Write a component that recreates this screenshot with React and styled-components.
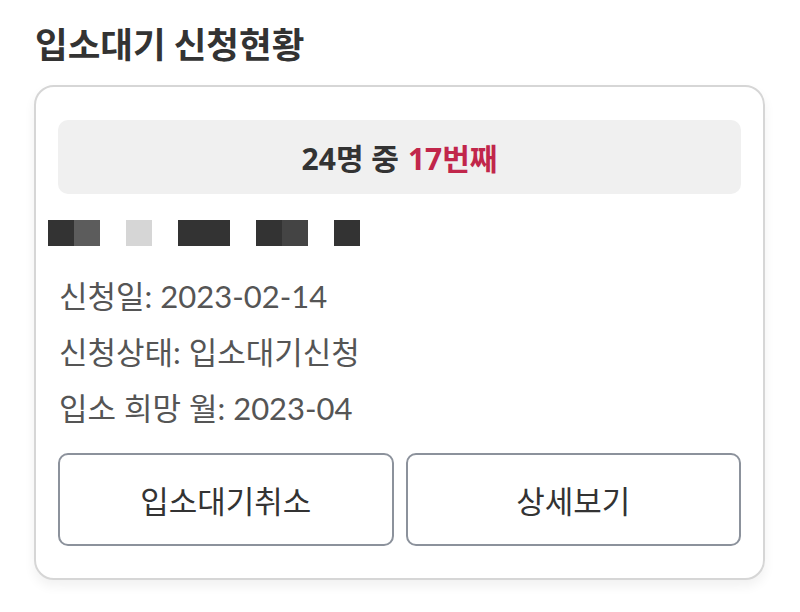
import React from "react";
import styled, { createGlobalStyle } from "styled-components";

const GlobalStyle = createGlobalStyle`
	html, body {
		margin: 0;
		padding: 0;
		background: #fff;
	}
	body {
		font-family: "Noto Sans CJK KR", "Noto Sans", sans-serif;
		color: #333;
	}
`;

const Page = styled.div`
	width: 800px;
	height: 612px;
	box-sizing: border-box;
	padding: 18px 35px 0 34px;
`;

const Title = styled.h2`
	margin: 0 0 17px 1px;
	font-size: 35.5px;
	line-height: 50px;
	font-weight: 700;
	color: #333;
`;

const Card = styled.section`
	box-sizing: border-box;
	width: 731px;
	border: 2px solid #d6d6d6;
	border-radius: 20px;
	padding: 33px 22px 32px;
	background: #fff;
	box-shadow: 0 6px 12px rgba(0, 0, 0, 0.06);
`;

const Rank = styled.div`
	height: 74px;
	border-radius: 10px;
	background: #f0f0f0;
	display: flex;
	align-items: center;
	justify-content: center;
	gap: 9px;
	font-family: "Noto Sans", "Noto Sans CJK KR", sans-serif;
	font-size: 30px;
	font-weight: 700;
	color: #333;
`;

const Accent = styled.span`
	color: #c1264b;
`;

const Mosaic = styled.div`
	display: flex;
	margin: 26px 0 0 -10px;
	height: 26px;
`;

const Cell = styled.span`
	width: 26px;
	height: 26px;
	background: ${({ $c }) => $c || "transparent"};
`;

const Info = styled.div`
	margin-top: 22px;
	padding-left: 1px;
	display: flex;
	flex-direction: column;
`;

const Line = styled.p`
	margin: 0;
	font-family: Lato, "Noto Sans CJK KR", sans-serif;
	font-size: 31px;
	line-height: 56px;
	color: #555;
`;

const Actions = styled.div`
	margin-top: 17px;
	display: grid;
	grid-template-columns: 1fr 1fr;
	gap: 12px;
`;

const Button = styled.button`
	height: 93px;
	border: 2px solid #8c929c;
	border-radius: 10px;
	background: #fff;
	font-family: "Noto Sans CJK KR", sans-serif;
	font-size: 31px;
	color: #333;
	cursor: pointer;
`;

// redacted name, drawn as a blurred mosaic
const cells = [
	"#333", "#5c5c5c", null, "#d6d6d6", null, "#333", "#333",
	null, "#333", "#444", null, "#333",
];

export default function App() {
	return (
		<>
			<GlobalStyle />
			<Page>
				<Title>입소대기 신청현황</Title>
				<Card>
					<Rank>
						<span>24명 중</span>
						<Accent>17번째</Accent>
					</Rank>
					<Mosaic>
						{cells.map((c, i) => (
							<Cell key={i} $c={c} />
						))}
					</Mosaic>
					<Info>
						<Line>신청일: 2023-02-14</Line>
						<Line>신청상태: 입소대기신청</Line>
						<Line>입소 희망 월: 2023-04</Line>
					</Info>
					<Actions>
						<Button>입소대기취소</Button>
						<Button>상세보기</Button>
					</Actions>
				</Card>
			</Page>
		</>
	);
}
